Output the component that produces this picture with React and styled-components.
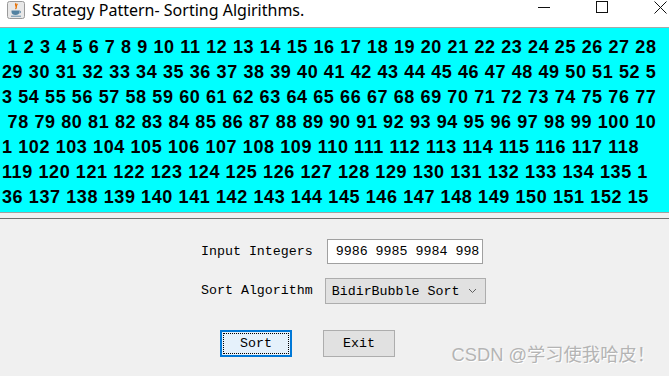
import React from 'react'
import styled, { createGlobalStyle } from 'styled-components'

const GlobalStyle = createGlobalStyle`
  html, body {
    margin: 0;
    padding: 0;
    background: #f0f0f0;
  }
`

const lines = [
  ' 1 2 3 4 5 6 7 8 9 10 11 12 13 14 15 16 17 18 19 20 21 22 23 24 25 26 27 28',
  '29 30 31 32 33 34 35 36 37 38 39 40 41 42 43 44 45 46 47 48 49 50 51 52 5',
  '3 54 55 56 57 58 59 60 61 62 63 64 65 66 67 68 69 70 71 72 73 74 75 76 77',
  ' 78 79 80 81 82 83 84 85 86 87 88 89 90 91 92 93 94 95 96 97 98 99 100 10',
  '1 102 103 104 105 106 107 108 109 110 111 112 113 114 115 116 117 118',
  '119 120 121 122 123 124 125 126 127 128 129 130 131 132 133 134 135 1',
  '36 137 138 139 140 141 142 143 144 145 146 147 148 149 150 151 152 15',
]

const JavaIcon = () => (
  <svg width="18" height="18" viewBox="0 0 18 18">
    <rect x="0.5" y="0.5" width="17" height="17" rx="2" fill="#e8e8e8" stroke="#9a9a9a" />
    <path d="M9 2 C7 4.5 11 5.5 8.5 8 C10.5 6.5 8 5 10.5 3" fill="none" stroke="#e76f00" strokeWidth="1.2" />
    <path d="M4.5 9.5 h8 v1.5 c0 2 -1.8 3 -4 3 c-2.2 0 -4 -1 -4 -3 z" fill="#5382a1" />
    <path d="M12.5 10 c1.6 0 1.6 2 0 2" fill="none" stroke="#5382a1" strokeWidth="0.9" />
    <path d="M4 15.2 h10" stroke="#5382a1" strokeWidth="0.9" />
  </svg>
)

const Chevron = () => (
  <svg width="9" height="6" viewBox="0 0 9 6">
    <path d="M1 1 L4.5 4.5 L8 1" fill="none" stroke="#606060" strokeWidth="1" />
  </svg>
)

const App = () => {
  return (
    <Window>
      <GlobalStyle />
      <TitleBar>
        <div className="title">
          <JavaIcon />
          <span>Strategy Pattern- Sorting Algirithms.</span>
        </div>
        <div className="controls">
          <svg width="12" height="12" viewBox="0 0 12 12">
            <path d="M0 6.5 H12" stroke="#111" strokeWidth="1" />
          </svg>
          <svg width="12" height="12" viewBox="0 0 12 12">
            <rect x="0.5" y="0.5" width="11" height="11" fill="none" stroke="#111" strokeWidth="1" />
          </svg>
          <svg width="13" height="13" viewBox="0 0 13 13">
            <path d="M0.5 0.5 L12.5 12.5 M12.5 0.5 L0.5 12.5" stroke="#111" strokeWidth="1" />
          </svg>
        </div>
      </TitleBar>

      <NumberArea>
        {lines.map((line, i) => (
          <div className="line" key={i}>{line}</div>
        ))}
      </NumberArea>

      <Divider />

      <ControlPanel>
        <FormGrid>
          <Label>Input Integers</Label>
          <TextField>9986 9985 9984 998</TextField>
          <Label>Sort Algorithm</Label>
          <Combo>
            <span>BidirBubble Sort</span>
            <Chevron />
          </Combo>
        </FormGrid>
        <ButtonRow>
          <Button focused>
            <span>Sort</span>
          </Button>
          <Button>
            <span>Exit</span>
          </Button>
        </ButtonRow>
        <Watermark>CSDN @学习使我哈皮！</Watermark>
      </ControlPanel>
    </Window>
  )
}

const Window = styled.div`
  width: 669px;
  height: 376px;
  display: flex;
  flex-direction: column;
  overflow: hidden;
  background: #f0f0f0;
`

const TitleBar = styled.div`
  height: 27px;
  flex: 0 0 auto;
  background: #fff;
  border-bottom: 1px solid #a8a8a8;
  display: flex;
  justify-content: space-between;
  align-items: flex-start;

  & .title {
    display: flex;
    align-items: center;
    gap: 7px;
    padding-left: 7px;
    margin-top: 1px;
    font-family: 'Noto Sans', 'Open Sans', sans-serif;
    font-size: 16px;
    color: #000;
    line-height: 18px;
  }
  & .controls {
    display: flex;
    align-items: flex-start;
    gap: 46px;
    padding-right: 2px;
    margin-top: 1px;
  }
`

const NumberArea = styled.div`
  height: 184px;
  flex: 0 0 auto;
  background: #00ffff;
  padding: 7px 0 0 2px;
  box-sizing: border-box;
  font-family: 'Liberation Sans', Arial, sans-serif;
  font-weight: 700;
  font-size: 18px;
  letter-spacing: 0.6px;
  color: #000;

  & .line {
    height: 25px;
    line-height: 25px;
    white-space: pre;
  }
`

const Divider = styled.div`
  height: 5px;
  flex: 0 0 auto;
  background: #f0f0f0;
  border-top: 1px solid #a0a0a0;
  border-bottom: 1px solid #6e6e6e;
`

const ControlPanel = styled.div`
  position: relative;
  flex: 1 1 auto;
  background: #f0f0f0;
  padding: 20px 0 0 201px;
  font-family: 'Liberation Mono', 'DejaVu Sans Mono', monospace;
  font-size: 13.3px;
  color: #000;
`

const FormGrid = styled.div`
  display: grid;
  grid-template-columns: auto auto;
  justify-content: start;
  align-items: center;
  column-gap: 13px;
  row-gap: 14px;
`

const Label = styled.div`
  line-height: 16px;
`

const TextField = styled.div`
  width: 156px;
  height: 25px;
  box-sizing: border-box;
  margin-left: 1px;
  background: #fff;
  border: 1px solid #a0a0a0;
  padding-left: 8px;
  display: flex;
  align-items: center;
  white-space: pre;
  overflow: hidden;
`

const Combo = styled.div`
  width: 161px;
  height: 26px;
  box-sizing: border-box;
  margin-left: -1px;
  background: #e1e1e1;
  border: 1px solid #adadad;
  padding: 0 8px 0 6px;
  display: flex;
  align-items: center;
  justify-content: space-between;
  white-space: pre;
`

const ButtonRow = styled.div`
  display: flex;
  gap: 31px;
  margin-top: 26px;
  margin-left: 19px;
`

const Button = styled.div`
  width: 72px;
  height: 27px;
  box-sizing: border-box;
  background: ${p => (p.focused ? '#e5f1fb' : '#e1e1e1')};
  border: ${p => (p.focused ? '2px solid #0078d7' : '1px solid #adadad')};
  padding: ${p => (p.focused ? '1px' : '2px')};
  display: flex;

  & > span {
    flex: 1;
    display: flex;
    align-items: center;
    justify-content: center;
    border: 1px dotted ${p => (p.focused ? '#000' : 'transparent')};
  }
`

const Watermark = styled.div`
  position: absolute;
  right: 14px;
  bottom: 10px;
  font-family: 'Liberation Sans', 'Noto Sans CJK SC', sans-serif;
  font-size: 18.3px;
  color: #b4b4b4;
  text-shadow: 1px 1px 0 #ffffff;
  white-space: nowrap;
`

export default App
